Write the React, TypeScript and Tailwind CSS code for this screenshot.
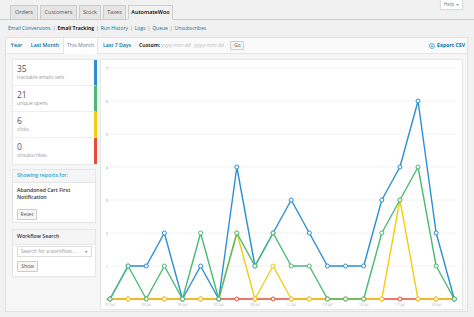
import React from "react";

const blue = [0, 1, 1, 2, 0, 1, 0, 4, 1, 2, 3, 2, 1, 1, 1, 3, 4, 6, 2, 0];
const green = [0, 1, 0, 1, 0, 2, 0, 2, 1, 2, 1, 1, 0, 0, 0, 2, 3, 4, 1, 0];
const yellow = [0, 0, 0, 0, 0, 0, 0, 2, 0, 1, 0, 0, 0, 0, 0, 0, 3, 0, 0, 0];
const red = new Array(20).fill(0);

const C_BLUE = "#2a8fd4";
const C_GREEN = "#4cba74";
const C_YELLOW = "#f3cd14";
const C_RED = "#e74c3c";

const X = (i: number) => 9 + 18.12 * i;
const Y = (v: number) => 239 - 33 * v;

function Series({ data, color }: { data: number[]; color: string }) {
  const pts = data.map((v, i) => `${X(i)},${Y(v)}`).join(" ");
  return (
    <g>
      <polyline points={pts} fill="none" stroke={color} strokeWidth={1.4} strokeLinejoin="round" />
      {data.map((v, i) => (
        <circle key={i} cx={X(i)} cy={Y(v)} r={2} fill="#fff" stroke={color} strokeWidth={1} />
      ))}
    </g>
  );
}

function Chart() {
  const labels = ["01 Jul", "03 Jul", "05 Jul", "07 Jul", "09 Jul", "11 Jul", "13 Jul", "15 Jul", "17 Jul", "19 Jul"];
  return (
    <svg width="361" height="249" viewBox="0 0 361 249">
      {[0, 1, 2, 3, 4, 5, 6, 7].map((v) => (
        <g key={v}>
          <line x1={9} x2={355} y1={Y(v)} y2={Y(v)} stroke="#f0f0f0" strokeWidth={0.8} />
          <text x={6} y={Y(v) + 1.5} fontSize={4.2} fill="#999" textAnchor="middle" fontFamily="Open Sans, sans-serif">
            {v}
          </text>
        </g>
      ))}
      {labels.map((l, k) => (
        <text key={l} x={X(k * 2)} y={245.5} fontSize={3.8} fill="#aaa" textAnchor="middle" fontFamily="Open Sans, sans-serif">
          {l}
        </text>
      ))}
      <Series data={red} color={C_RED} />
      <Series data={yellow} color={C_YELLOW} />
      <Series data={blue} color={C_BLUE} />
      <Series data={green} color={C_GREEN} />
    </svg>
  );
}

function Tab({ label, w, active }: { label: string; w: string; active?: boolean }) {
  return (
    <div
      className={
        "h-[15px] -mb-px border flex items-center justify-center text-[5.5px] " +
        w +
        (active
          ? " bg-[#f1f1f1] border-[#ccc] border-b-[#f1f1f1] text-[#000] font-semibold"
          : " bg-[#e5e5e5] border-[#ccc] text-[#555] font-normal")
      }
    >
      {label}
    </div>
  );
}

function LegendItem({ num, label, color, last }: { num: string; label: string; color: string; last?: boolean }) {
  return (
    <div
      className={"h-[26px] bg-white border-r-[3px] pl-[4px] pt-[4px] " + (last ? "" : "border-b border-b-[#eee]")}
      style={{ borderRightColor: color }}
    >
      <div className="text-[8.5px] leading-[10px] text-[#555]">{num}</div>
      <div className="text-[4.8px] leading-[7px] text-[#999]">{label}</div>
    </div>
  );
}

export default function App() {
  return (
    <div
      className="w-[474px] h-[317px] bg-[#f1f1f1] overflow-hidden text-[#444]"
      style={{ fontFamily: '"Open Sans", "Noto Sans", sans-serif' }}
    >
      {/* tabs */}
      <div className="flex items-end justify-between h-[20px] border-b border-[#ccc] relative">
        <div className="flex items-end gap-[2px] pl-[10px]">
          <Tab label="Orders" w="w-[28px]" />
          <Tab label="Customers" w="w-[37px]" />
          <Tab label="Stock" w="w-[22px]" />
          <Tab label="Taxes" w="w-[23px]" />
          <Tab label="AutomateWoo" w="w-[45px]" active />
        </div>
        <div className="self-start mr-[11px] w-[23px] h-[10px] bg-white border border-t-0 border-[#ddd] shadow-[0_0_1px_rgba(0,0,0,0.1)] flex items-center justify-center text-[4.8px] text-[#777] gap-[1.5px]">
          <span>Help</span>
          <span className="text-[3.5px]">▼</span>
        </div>
      </div>

      {/* subnav */}
      <div className="h-[17px] flex items-center pl-[8px] text-[5px] text-[#0073aa] gap-[2px]">
        <span>Email Conversions</span>
        <span className="text-[#777]">|</span>
        <span className="font-bold text-[#222]">Email Tracking</span>
        <span className="text-[#777]">|</span>
        <span>Run History</span>
        <span className="text-[#777]">|</span>
        <span>Logs</span>
        <span className="text-[#777]">|</span>
        <span>Queue</span>
        <span className="text-[#777]">|</span>
        <span>Unsubscribes</span>
      </div>

      {/* postbox */}
      <div className="ml-[5px] w-[463px] border border-[#e1e1e1] bg-white">
        {/* filter bar */}
        <div className="h-[16px] flex items-stretch border-b border-[#e5e5e5] bg-[#fafafa] text-[5.2px] font-semibold">
          <div className="w-[21px] flex items-center justify-center text-[#0073aa]">Year</div>
          <div className="w-[36px] flex items-center justify-center text-[#0073aa]">Last Month</div>
          <div className="w-[35px] -mb-px flex items-center justify-center bg-white border-x border-[#e5e5e5] text-[#777] font-normal">
            This Month
          </div>
          <div className="w-[38px] flex items-center justify-center text-[#0073aa]">Last 7 Days</div>
          <div className="flex items-center ml-[3px] gap-[1px]">
            <span className="text-[#333] font-bold">Custom:</span>
            <span className="w-[32px] text-[#bbb] font-normal">yyyy-mm-dd</span>
            <span className="w-[35px] text-[#bbb] font-normal">yyyy-mm-dd</span>
            <span className="h-[9px] w-[14px] border border-[#ccc] bg-[#f7f7f7] rounded-[1px] flex items-center justify-center text-[#555] font-normal text-[4.8px]">
              Go
            </span>
          </div>
          <div className="ml-auto flex items-center gap-[2px] pr-[2px] text-[#0073aa]">
            <svg width="6" height="6" viewBox="0 0 12 12">
              <circle cx="6" cy="6" r="5" fill="none" stroke="#0073aa" strokeWidth="1.1" />
              <path d="M6 3.2v4.6M4 5.8l2 2 2-2" fill="none" stroke="#0073aa" strokeWidth="1.1" />
            </svg>
            <span className="font-bold">Export CSV</span>
          </div>
        </div>

        {/* body */}
        <div className="flex bg-[#f6f6f6] pl-[6px] pr-[4px] pt-[5px] pb-[1px] gap-[3px]">
          {/* sidebar */}
          <div className="w-[85px] flex flex-col">
            <div className="border border-[#e8e8e8] border-r-0">
              <LegendItem num="35" label="trackable emails sent" color={C_BLUE} />
              <LegendItem num="21" label="unique opens" color={C_GREEN} />
              <LegendItem num="6" label="clicks" color={C_YELLOW} />
              <LegendItem num="0" label="unsubscribes" color={C_RED} last />
            </div>

            <div className="mt-[4px] mr-[1px] bg-white border border-[#e5e5e5]">
              <div className="h-[13px] flex items-center pl-[4px] bg-[#f5f5f5] border-b border-[#e5e5e5] text-[5.2px] text-[#2ea2cc] font-semibold">
                Showing reports for:
              </div>
              <div className="px-[4px] pt-[4px] pb-[2px]">
                <div className="text-[5.2px] leading-[7px] font-semibold text-[#333]">
                  Abandoned Cart First
                  <br />
                  Notification
                </div>
                <div className="mt-[8px] w-[20px] h-[11px] border border-[#ccc] bg-[#f7f7f7] rounded-[1px] flex items-center justify-center text-[5px] text-[#555]">
                  Reset
                </div>
              </div>
            </div>

            <div className="mt-[6px] mr-[1px] bg-white border border-[#e5e5e5]">
              <div className="h-[15px] flex items-center pl-[4px] bg-[#f5f5f5] border-b border-[#e5e5e5] text-[5.2px] text-[#333] font-semibold">
                Workflow Search
              </div>
              <div className="px-[4px] pt-[1px] pb-[4px]">
                <div className="w-[75px] h-[11px] border border-[#ddd] bg-white flex items-center justify-between px-[3px] text-[5px] text-[#999]">
                  <span>Search for a workflow...</span>
                  <span className="text-[3.5px] text-[#777]">▼</span>
                </div>
                <div className="mt-[4px] w-[21px] h-[11px] border border-[#ccc] bg-[#f7f7f7] rounded-[1px] flex items-center justify-center text-[5px] text-[#555]">
                  Show
                </div>
              </div>
            </div>
          </div>

          {/* chart */}
          <div className="w-[363px] h-[251px] bg-white border border-[#e5e5e5]">
            <Chart />
          </div>
        </div>
      </div>
    </div>
  );
}
